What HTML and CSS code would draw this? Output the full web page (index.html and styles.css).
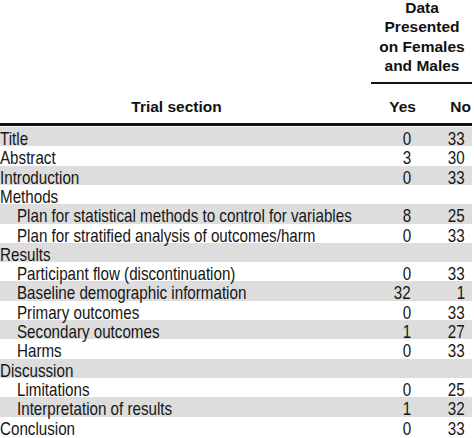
FILE: index.html
```html
<!DOCTYPE html>
<html>
<head>
<meta charset="utf-8">
<link rel="stylesheet" href="styles.css">
</head>
<body>
<div class="table">
  <div class="head">
    <div class="group">Data<br>Presented<br>on Females<br>and Males</div>
    <div class="hlabel">Trial section</div>
    <div class="hyes">Yes</div>
    <div class="hno">No</div>
  </div>
  <div class="body">
    <div class="row shade"><div class="label"><span>Title</span></div><div class="yes"><span>0</span></div><div class="no"><span>33</span></div></div>
    <div class="row"><div class="label"><span>Abstract</span></div><div class="yes"><span>3</span></div><div class="no"><span>30</span></div></div>
    <div class="row shade"><div class="label"><span>Introduction</span></div><div class="yes"><span>0</span></div><div class="no"><span>33</span></div></div>
    <div class="row"><div class="label"><span>Methods</span></div><div class="yes"></div><div class="no"></div></div>
    <div class="row shade"><div class="label sub"><span>Plan for statistical methods to control for variables</span></div><div class="yes"><span>8</span></div><div class="no"><span>25</span></div></div>
    <div class="row"><div class="label sub"><span>Plan for stratified analysis of outcomes/harm</span></div><div class="yes"><span>0</span></div><div class="no"><span>33</span></div></div>
    <div class="row shade"><div class="label"><span>Results</span></div><div class="yes"></div><div class="no"></div></div>
    <div class="row"><div class="label sub"><span>Participant flow (discontinuation)</span></div><div class="yes"><span>0</span></div><div class="no"><span>33</span></div></div>
    <div class="row shade"><div class="label sub"><span>Baseline demographic information</span></div><div class="yes"><span>32</span></div><div class="no"><span>1</span></div></div>
    <div class="row"><div class="label sub"><span>Primary outcomes</span></div><div class="yes"><span>0</span></div><div class="no"><span>33</span></div></div>
    <div class="row shade"><div class="label sub"><span>Secondary outcomes</span></div><div class="yes"><span>1</span></div><div class="no"><span>27</span></div></div>
    <div class="row"><div class="label sub"><span>Harms</span></div><div class="yes"><span>0</span></div><div class="no"><span>33</span></div></div>
    <div class="row shade"><div class="label"><span>Discussion</span></div><div class="yes"></div><div class="no"></div></div>
    <div class="row"><div class="label sub"><span>Limitations</span></div><div class="yes"><span>0</span></div><div class="no"><span>25</span></div></div>
    <div class="row shade"><div class="label sub"><span>Interpretation of results</span></div><div class="yes"><span>1</span></div><div class="no"><span>32</span></div></div>
    <div class="row"><div class="label"><span>Conclusion</span></div><div class="yes"><span>0</span></div><div class="no"><span>33</span></div></div>
  </div>
</div>
</body>
</html>
```
FILE: styles.css
```css
html, body {
  margin: 0;
  padding: 0;
  background: #fff;
  overflow: hidden;
}
body {
  width: 474px;
  height: 438px;
  color: #161616;
}
.table {
  width: 472px;
}
.head {
  display: grid;
  grid-template-columns: 371px 50px 51px;
  margin-top: -2px;
  font-family: "Liberation Sans", Arial, sans-serif;
  font-weight: bold;
  font-size: 15.5px;
  line-height: 19.3px;
  color: #111;
  border-bottom: 3px solid #111;
}
.group {
  grid-column: 2 / 4;
  text-align: center;
  padding-left: 1px;
  padding-bottom: 6.6px;
  border-bottom: 2px solid #111;
}
.hlabel {
  grid-column: 1;
  text-align: center;
  padding-right: 18px;
  padding-top: 13px;
  padding-bottom: 6.5px;
}
.hyes {
  text-align: right;
  padding-right: 5px;
  padding-top: 13px;
}
.hno {
  text-align: right;
  padding-top: 13px;
  padding-right: 1px;
}
.body {
  padding-top: 1.5px;
  font-family: "Liberation Sans", Arial, sans-serif;
  font-size: 18.5px;
  line-height: 19.3px;
}
.row {
  display: grid;
  grid-template-columns: 371px 50px 51px;
  height: 19.3px;
  white-space: nowrap;
}
.row.shade {
  background: #dddddd;
}
.label span,
.yes span,
.no span {
  display: inline-block;
  transform: translateY(2px) scaleX(0.82);
}
.label span {
  transform-origin: left center;
}
.yes span,
.no span {
  transform-origin: right center;
}
.label.sub {
  padding-left: 17px;
}
.yes {
  text-align: right;
  padding-right: 10px;
}
.no {
  text-align: right;
  padding-right: 7px;
}
```
